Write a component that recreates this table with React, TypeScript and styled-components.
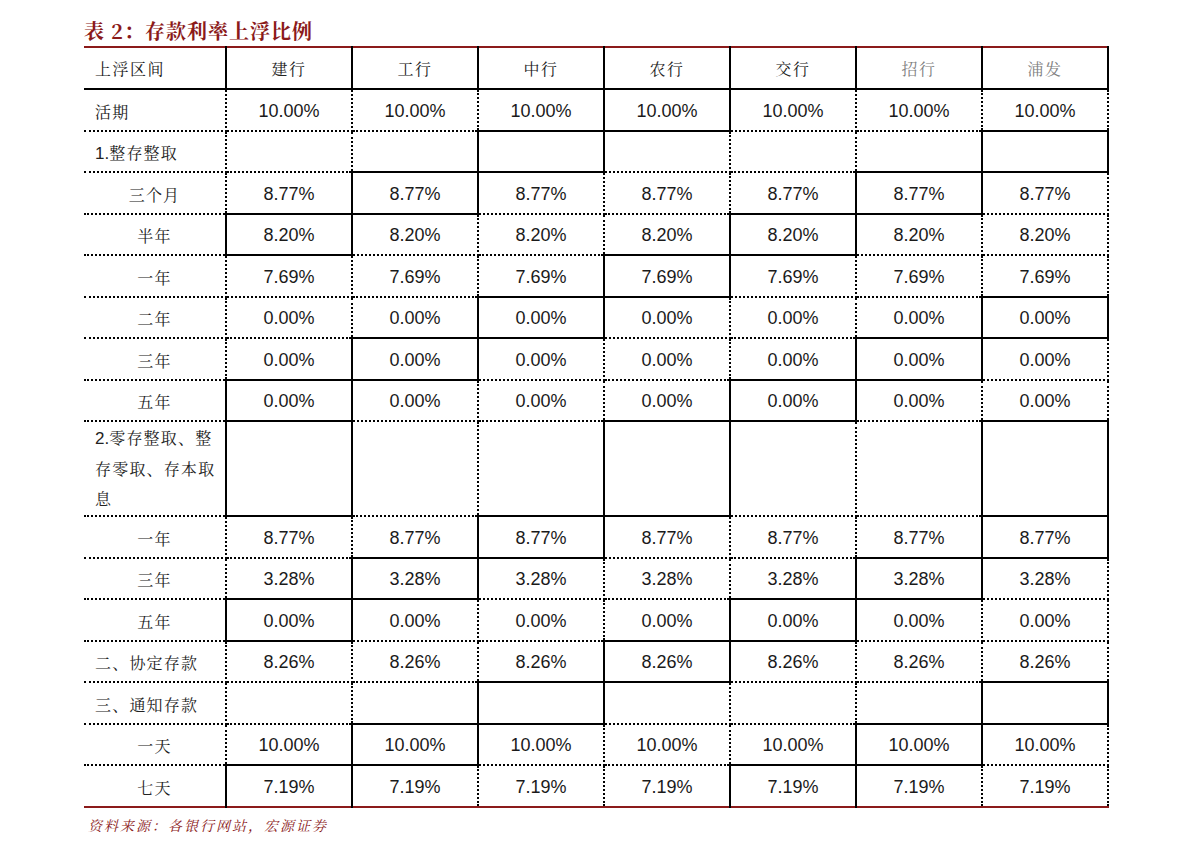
import React from "react";
import styled, {createGlobalStyle} from "styled-components";

const CJK = `"Noto Serif CJK SC", "Noto Sans CJK SC", serif`
const NUM = `"Liberation Sans", Arial, sans-serif`
const RED = "#8b1a1a"

const Num = styled.span`
  font-family: ${NUM};
  font-size: 17px;
  letter-spacing: 0;
`

const banks = ["建行", "工行", "中行", "农行", "交行", "招行", "浦发"]

type Row = {
    label: React.ReactNode
    align: "left" | "center"
    value?: string
    tall?: boolean
}

const rows: Row[] = [
    {label: "活期", align: "left", value: "10.00%"},
    {label: <><Num>1.</Num>整存整取</>, align: "left"},
    {label: "三个月", align: "center", value: "8.77%"},
    {label: "半年", align: "center", value: "8.20%"},
    {label: "一年", align: "center", value: "7.69%"},
    {label: "二年", align: "center", value: "0.00%"},
    {label: "三年", align: "center", value: "0.00%"},
    {label: "五年", align: "center", value: "0.00%"},
    {label: <><Num>2.</Num>零存整取、整<br/>存零取、存本取<br/>息</>, align: "left", tall: true},
    {label: "一年", align: "center", value: "8.77%"},
    {label: "三年", align: "center", value: "3.28%"},
    {label: "五年", align: "center", value: "0.00%"},
    {label: "二、协定存款", align: "left", value: "8.26%"},
    {label: "三、通知存款", align: "left"},
    {label: "一天", align: "center", value: "10.00%"},
    {label: "七天", align: "center", value: "7.19%"},
]

// the source pdf mixes solid and dotted rules, roughly a scattered pattern
const isBoxed = (r: number, c: number) =>
    (r + c) % 4 === 0 || (r === 8 && (c === 1 || c === 7))

export default function App() {
    return (
        <>
            <GlobalStyle/>
            <Page>
                <Title>表 2：存款利率上浮比例</Title>
                <Table>
                    <colgroup>
                        <col style={{width: 142}}/>
                        {banks.map(b => <col key={b} style={{width: 126}}/>)}
                    </colgroup>
                    <thead>
                    <tr>
                        <HeadCell $first>上浮区间</HeadCell>
                        {banks.map((b, i) => (
                            <HeadCell key={b} $muted={i >= 5}>{b}</HeadCell>
                        ))}
                    </tr>
                    </thead>
                    <tbody>
                    {rows.map((row, r) => (
                        <BodyRow key={r} $tall={row.tall}>
                            <LabelCell $align={row.align} $tall={row.tall}>{row.label}</LabelCell>
                            {banks.map((b, i) => (
                                <ValueCell key={b} $solid={isBoxed(r, i + 1)}>
                                    {row.value ?? ""}
                                </ValueCell>
                            ))}
                        </BodyRow>
                    ))}
                    </tbody>
                </Table>
                <Source>资料来源：各银行网站，宏源证券</Source>
            </Page>
        </>
    )
}

const GlobalStyle = createGlobalStyle`
  body {
    margin: 0;
    background: #fff;
  }
`

const Page = styled.div`
  width: 1024px;
  padding: 16px 0 0 84px;
`

const Title = styled.h1`
  margin: 0;
  height: 30px;
  font-family: ${CJK};
  font-size: 20px;
  line-height: 30px;
  font-weight: 700;
  letter-spacing: 1px;
  color: ${RED};
`

const Table = styled.table`
  width: 1024px;
  table-layout: fixed;
  border-collapse: collapse;
  border-top: 2px solid ${RED};
  border-bottom: 2px solid ${RED};
`

const HeadCell = styled.th<{ $first?: boolean, $muted?: boolean }>`
  height: 40px;
  padding: 0 ${p => p.$first ? "11px" : "0"};
  border: 2px solid #000;
  border-top: none;
  border-left: ${p => p.$first ? "none" : "2px solid #000"};
  text-align: ${p => p.$first ? "left" : "center"};
  font-family: ${CJK};
  font-size: 16px;
  font-weight: 400;
  letter-spacing: 1.5px;
  color: ${p => p.$muted ? "#808080" : "#222"};
`

const BodyRow = styled.tr<{ $tall?: boolean }>`
  height: ${p => p.$tall ? "95px" : "41.5px"};

  &:last-child td {
    border-bottom: none;
  }
`

const LabelCell = styled.td<{ $align: "left" | "center", $tall?: boolean }>`
  padding: ${p => p.$tall ? "0 0 0 11px" : "3px 11px 0"};
  border-top: 2px dotted #000;
  border-bottom: 2px dotted #000;
  border-right: 2px dotted #000;
  white-space: nowrap;
  text-align: ${p => p.$align};
  font-family: ${CJK};
  font-size: 16px;
  line-height: ${p => p.$tall ? "30px" : "normal"};
  letter-spacing: 1.2px;
  color: #222;
`

const ValueCell = styled.td<{ $solid?: boolean }>`
  padding: 3px 0 0;
  border: 2px ${p => p.$solid ? "solid #000" : "dotted #000"};
  text-align: center;
  font-family: ${NUM};
  font-size: 18px;
  color: #1a1a1a;
`

const Source = styled.div`
  margin-top: 7px;
  padding-left: 4px;
  font-family: ${CJK};
  font-size: 14px;
  line-height: 20px;
  font-style: italic;
  letter-spacing: 2px;
  color: ${RED};
`
